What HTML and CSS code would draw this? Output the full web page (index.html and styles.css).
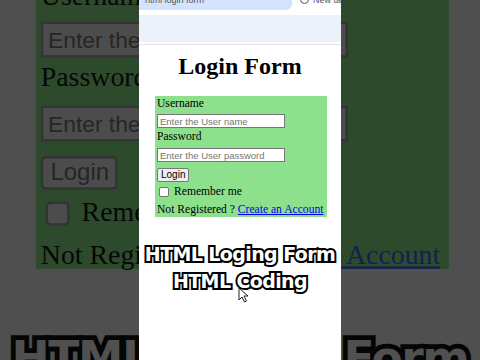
FILE: index.html
```html
<!DOCTYPE html>
<html lang="en">
<head>
  <meta charset="UTF-8" />
  <title>HTML Login Form</title>
  <link rel="stylesheet" href="styles.css">
</head>
<body>
<div class="stage">

  <!-- dimmed, zoomed copy of the frame behind the short -->
  <div class="backdrop" aria-hidden="true">
    <div class="frame zoomed">
      <div class="tabbar">
        <div class="tab">html login form</div>
        <span class="tab-icon"></span><span class="tab-new">New tab</span>
      </div>
      <div class="toolbar"></div>
      <h2 class="title">Login Form</h2>
      <div class="login-box">
        <div class="row">Username</div>
        <div class="field">Enter the User name</div>
        <div class="row">Password</div>
        <div class="field">Enter the User password</div>
        <div class="btn">Login</div>
        <div class="row check-row"><span class="check"></span>Remember me</div>
        <div class="row">Not Registered ? <span class="link">Create an Account</span></div>
      </div>
      <div class="caption">HTML Loging Form<br>HTML Coding</div>
    </div>
  </div>

  <div class="frame">
    <div class="tabbar">
      <div class="tab">html login form</div>
      <span class="tab-icon"></span><span class="tab-new">New tab</span>
    </div>
    <div class="toolbar"></div>
    <h2 class="title">Login Form</h2>
    <form class="login-box" onsubmit="return false;">
      <label class="row" for="user">Username</label>
      <input class="field" id="user" type="text" placeholder="Enter the User name">
      <label class="row" for="pass">Password</label>
      <input class="field" id="pass" type="password" placeholder="Enter the User password">
      <button class="btn" type="submit">Login</button>
      <label class="row check-row"><input class="check" type="checkbox"> Remember me</label>
      <div class="row">Not Registered ? <a class="link" href="#">Create an Account</a></div>
    </form>
    <div class="caption">HTML Loging Form<br>HTML Coding</div>
    <svg class="cursor" width="11" height="16" viewBox="0 0 11 16">
      <path d="M1 1 L1 13 L4 10 L6.5 15 L8.5 14 L6 9 L10 9 Z" fill="#fff" stroke="#222" stroke-width="1"/>
    </svg>
  </div>

</div>
</body>
</html>
```

FILE: styles.css
```css
body {
  margin: 0;
  background: #4f4f4f;
}

.stage {
  position: relative;
  width: 480px;
  height: 360px;
  overflow: hidden;
  display: flex;
  justify-content: center;
  background: #4f4f4f;
}

.backdrop {
  position: absolute;
  top: 0;
  left: 0;
  width: 480px;
  height: 360px;
  display: flex;
  justify-content: center;
  align-items: center;
  overflow: hidden;
}

.frame {
  position: relative;
  flex-shrink: 0;
  width: 202px;
  height: 360px;
  background: #fff;
  display: flex;
  flex-direction: column;
  overflow: hidden;
  font-family: "Liberation Serif", serif;
}

/* browser chrome */
.tabbar {
  height: 15px;
  display: flex;
  align-items: flex-start;
  font-family: "Liberation Sans", sans-serif;
  font-size: 9px;
  color: #555;
  white-space: nowrap;
}
.tab {
  flex-shrink: 0;
  width: 153px;
  height: 10px;
  background: #d3e3fd;
  border-bottom-right-radius: 6px;
  line-height: 0;
  padding-left: 6px;
  box-sizing: border-box;
  overflow: hidden;
}
.tab-icon {
  flex-shrink: 0;
  width: 7px;
  height: 7px;
  border: 1.5px solid #555;
  border-radius: 50%;
  margin: -5px 0 0 8px;
}
.tab-new {
  margin-left: 4px;
  line-height: 0;
}
.toolbar {
  height: 27px;
  background: #edf2fa;
  border-bottom: 2px solid #fff;
  box-shadow: 0 1px 0 #e3e3e3;
}

.title {
  margin: 7px 0 0;
  text-align: center;
  font-size: 24px;
  line-height: 30px;
  font-weight: bold;
}

/* the form */
.login-box {
  margin: 15px 0 0 16px;
  width: 172px;
  height: 121px;
  box-sizing: border-box;
  background: #8de08c;
  padding: 1px 2px 0;
  display: flex;
  flex-direction: column;
  align-items: flex-start;
  font-size: 11.6px;
  color: #000;
}
.row {
  display: block;
  line-height: 14px;
  height: 14px;
  white-space: nowrap;
}
.field {
  width: 128px;
  height: 15px;
  margin: 3px 0 2px;
  box-sizing: border-box;
  border: 1px solid #767676;
  background: #fff;
  padding: 0 2px;
  font-family: "Liberation Sans", sans-serif;
  font-size: 9.5px;
  line-height: 13px;
  color: #757575;
}
.field::placeholder {
  color: #757575;
}
.field + .row + .field {
  margin-top: 4px;
}
.btn {
  margin-top: 4px;
  height: 14px;
  padding: 0 3px;
  box-sizing: border-box;
  border: 1px solid #767676;
  border-radius: 2px;
  background: #efefef;
  font-family: "Liberation Sans", sans-serif;
  font-size: 10px;
  line-height: 12px;
  color: #000;
}
.check-row {
  margin-top: 3px;
  padding-left: 2px;
  display: flex;
  align-items: center;
}
.check {
  width: 10px;
  height: 10px;
  margin: 0 5px 0 0;
  box-sizing: border-box;
  border: 1px solid #767676;
  border-radius: 2px;
  background: #fff;
  appearance: none;
}
.check-row + .row {
  margin-top: 4px;
}
.link {
  color: #0000ee;
  text-decoration: underline;
}

/* video caption */
.caption {
  margin-top: 24px;
  text-align: center;
  font-family: "DejaVu Sans", sans-serif;
  font-weight: bold;
  font-size: 19px;
  line-height: 27px;
  letter-spacing: -0.6px;
  color: #fff;
  -webkit-text-stroke: 4px #000;
  paint-order: stroke fill;
}

.cursor {
  position: absolute;
  left: 99px;
  top: 287px;
}

/* zoomed copy: same layout, dimmed colours */
.frame.zoomed {
  transform: scale(2.4);
  background: #4f4f4f;
}
.zoomed .tab { background: #43474f; }
.zoomed .toolbar { background: #4b4d50; }
.zoomed .login-box { background: #2d4a2d; }
.zoomed .field,
.zoomed .btn,
.zoomed .check {
  background: #4c4c4c;
  border-color: #333;
  color: #262626;
}
.zoomed .row,
.zoomed .title { color: #050805; }
.zoomed .link { color: #132055; }
.zoomed .caption {
  color: #505050;
  -webkit-text-stroke-color: #050505;
}
```
